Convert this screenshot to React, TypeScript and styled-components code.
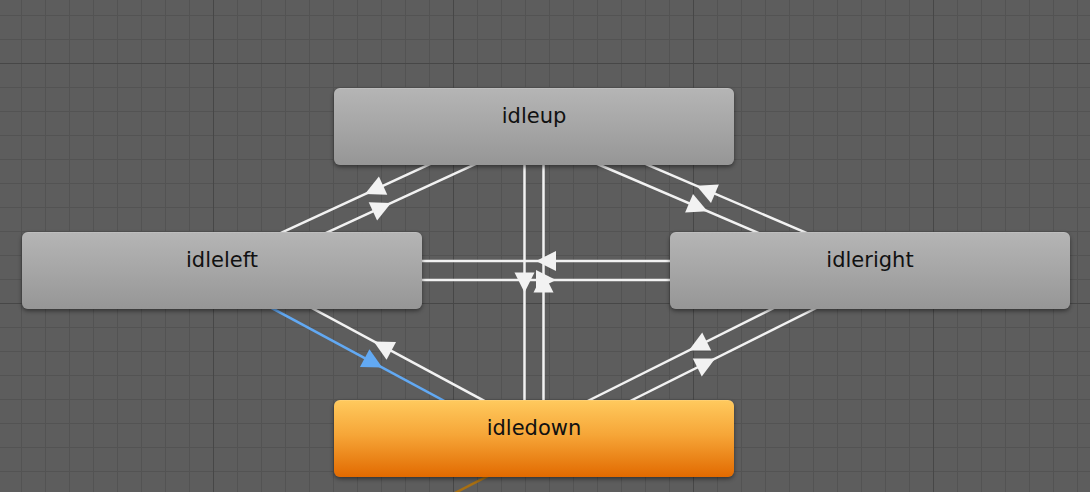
import React from "react";
import styled, { createGlobalStyle } from "styled-components";

const GlobalStyle = createGlobalStyle`
  html, body { margin: 0; padding: 0; background: #5d5d5d; }
  #root { width: 1090px; height: 492px; }
`;

const NODE_W = 400;
const NODE_H = 77;

type NodeId = "up" | "left" | "right" | "down";

const nodes: Record<NodeId, { x: number; y: number; label: string; active?: boolean }> = {
  up: { x: 334, y: 88, label: "idleup" },
  left: { x: 22, y: 232, label: "idleleft" },
  right: { x: 670, y: 232, label: "idleright" },
  down: { x: 334, y: 400, label: "idledown", active: true },
};

const transitions: { from: NodeId; to: NodeId; selected?: boolean }[] = [
  { from: "up", to: "left" },
  { from: "left", to: "up" },
  { from: "up", to: "right" },
  { from: "right", to: "up" },
  { from: "up", to: "down" },
  { from: "down", to: "up" },
  { from: "left", to: "right" },
  { from: "right", to: "left" },
  { from: "down", to: "left" },
  { from: "right", to: "down" },
  { from: "down", to: "right" },
  { from: "left", to: "down", selected: true },
];

const center = (id: NodeId) => ({
  x: nodes[id].x + NODE_W / 2,
  y: nodes[id].y + NODE_H / 2,
});

const Canvas = styled.div`
  position: relative;
  width: 1090px;
  height: 492px;
  overflow: hidden;
  background-color: #5d5d5d;
  background-image:
    linear-gradient(to right, #474747 1px, transparent 1px),
    linear-gradient(to bottom, #474747 1px, transparent 1px),
    linear-gradient(to right, #535353 1px, transparent 1px),
    linear-gradient(to bottom, #535353 1px, transparent 1px);
  background-size: 240px 240px, 240px 240px, 24px 24px, 24px 24px;
  background-position: 213px 0, 0 63px, 21px 0, 0 15px;
`;

const EdgeLayer = styled.svg`
  position: absolute;
  left: 0;
  top: 0;
  width: 1090px;
  height: 492px;
`;

const StateNode = styled.div<{ $x: number; $y: number; $active?: boolean }>`
  position: absolute;
  left: ${(p) => p.$x}px;
  top: ${(p) => p.$y}px;
  width: ${NODE_W}px;
  height: ${NODE_H}px;
  box-sizing: border-box;
  padding-top: 16px;
  border-radius: 6px;
  background: ${(p) =>
    p.$active
      ? "linear-gradient(to bottom, #ffca5e 0%, #f6a638 45%, #e26a00 100%)"
      : "linear-gradient(to bottom, #b5b5b5 0%, #a6a6a6 50%, #969696 100%)"};
  box-shadow: 0 2px 4px rgba(0, 0, 0, 0.45), inset 0 1px 0 rgba(255, 255, 255, 0.12);
  font-family: "DejaVu Sans", "Liberation Sans", sans-serif;
  font-size: 21px;
  line-height: 24px;
  color: #111;
  text-align: center;
`;

const OFFSET = 9.5;
const ARROW = 10;

function Edge({ from, to, selected }: { from: NodeId; to: NodeId; selected?: boolean }) {
  const a = center(from);
  const b = center(to);
  const dx = b.x - a.x;
  const dy = b.y - a.y;
  const len = Math.hypot(dx, dy);
  const ux = dx / len;
  const uy = dy / len;
  const nx = -uy;
  const ny = ux;
  const ox = nx * OFFSET;
  const oy = ny * OFFSET;
  const x1 = a.x + ox;
  const y1 = a.y + oy;
  const x2 = b.x + ox;
  const y2 = b.y + oy;
  const cx = (x1 + x2) / 2;
  const cy = (y1 + y2) / 2;
  const apex = [cx + ux * ARROW, cy + uy * ARROW];
  const bx = cx - ux * ARROW;
  const by = cy - uy * ARROW;
  const p1 = [bx + nx * ARROW, by + ny * ARROW];
  const p2 = [bx - nx * ARROW, by - ny * ARROW];
  const color = selected ? "#62a9f3" : "#f2f2f2";
  return (
    <g>
      <line x1={x1} y1={y1} x2={x2} y2={y2} stroke={color} strokeWidth={2.5} />
      <polygon
        points={`${apex[0]},${apex[1]} ${p1[0]},${p1[1]} ${p2[0]},${p2[1]}`}
        fill={color}
      />
    </g>
  );
}

export default function App() {
  return (
    <>
      <GlobalStyle />
      <Canvas>
        <EdgeLayer viewBox="0 0 1090 492">
          <line x1={520} y1={459.5} x2={420} y2={511} stroke="#a86f12" strokeWidth={2.5} />
          {transitions
            .filter((t) => !t.selected)
            .map((t) => (
              <Edge key={`${t.from}-${t.to}`} {...t} />
            ))}
          {transitions
            .filter((t) => t.selected)
            .map((t) => (
              <Edge key={`${t.from}-${t.to}`} {...t} />
            ))}
        </EdgeLayer>
        {(Object.keys(nodes) as NodeId[]).map((id) => (
          <StateNode key={id} $x={nodes[id].x} $y={nodes[id].y} $active={nodes[id].active}>
            {nodes[id].label}
          </StateNode>
        ))}
      </Canvas>
    </>
  );
}
